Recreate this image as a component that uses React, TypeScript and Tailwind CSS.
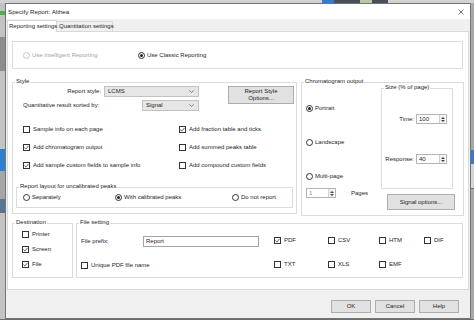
import type { ReactNode } from 'react';

const font = { fontFamily: '"Liberation Sans", Arial, sans-serif' };

function Check({ checked, label }: { checked?: boolean; label: string }) {
    return (
        <div className='flex items-center gap-[3px] whitespace-nowrap'>
            <span className='w-[7px] h-[7px] border border-[#333] bg-white flex items-center justify-center shrink-0'>
                {checked && (
                    <svg width='5' height='5' viewBox='0 0 5 5'>
                        <path d='M0.4 2.6 L1.9 4 L4.6 0.8' fill='none' stroke='#333' strokeWidth='0.8' />
                    </svg>
                )}
            </span>
            <span>{label}</span>
        </div>
    );
}

function Radio({ checked, label, disabled }: { checked?: boolean; label: string; disabled?: boolean }) {
    return (
        <div className={`flex items-center gap-[2px] whitespace-nowrap ${disabled ? 'text-[#a3a3a3]' : ''}`}>
            <span
                className={`w-[7px] h-[7px] rounded-full border bg-white flex items-center justify-center shrink-0 ${
                    disabled ? 'border-[#c4c4c4]' : 'border-[#333]'
                }`}
            >
                {checked && <span className='w-[3px] h-[3px] rounded-full bg-[#222]' />}
            </span>
            <span>{label}</span>
        </div>
    );
}

function Group({ title, className, children }: { title?: string; className: string; children?: ReactNode }) {
    return (
        <div className={`border border-[#dcdcdc] ${className}`}>
            {title && <div className='-mt-[5px] ml-[2px] w-fit h-[7px] px-[1px] bg-white leading-[7px] whitespace-nowrap'>{title}</div>}
            {children}
        </div>
    );
}

function Btn({ children, className }: { children: ReactNode; className: string }) {
    return (
        <div className={`bg-[#e1e1e1] border border-[#adadad] flex items-center justify-center text-center leading-[7px] ${className}`}>
            {children}
        </div>
    );
}

function Select({ value, className }: { value: string; className: string }) {
    return (
        <div className={`h-[11px] bg-[#e6e6e6] border border-[#c2c2c2] flex items-center justify-between pl-[3px] pr-[4px] ${className}`}>
            <span>{value}</span>
            <svg width='5' height='3' viewBox='0 0 5 3'>
                <path d='M0.3 0.4 L2.5 2.5 L4.7 0.4' fill='none' stroke='#555' strokeWidth='0.7' />
            </svg>
        </div>
    );
}

function Spin({ value, className }: { value: string; className: string }) {
    return (
        <div className={`h-[10px] bg-white border border-[#b4b4b4] flex items-center justify-between pl-[2px] ${className}`}>
            <span>{value}</span>
            <div className='w-[6px] h-full mr-[1px] flex flex-col items-center justify-center gap-[1px] bg-[#f2f2f2] border-l border-[#d0d0d0]'>
                <svg width='4' height='2' viewBox='0 0 4 2'>
                    <path d='M0 2 L2 0 L4 2 Z' fill='#444' />
                </svg>
                <svg width='4' height='2' viewBox='0 0 4 2'>
                    <path d='M0 0 L2 2 L4 0 Z' fill='#444' />
                </svg>
            </div>
        </div>
    );
}

export default function App() {
    return (
        <div className='w-[474px] h-[320px] bg-[#9e9e9e] flex flex-col overflow-hidden text-[6px] text-[#1e1e1e]' style={font}>
            {/* desktop behind the dialog */}
            <div className='h-[3px] flex bg-[#d2d2d2]'>
                <div className='w-[322px]' />
                <div className='w-[12px] bg-[#2d7fc8]' />
                <div className='w-[26px] bg-[#4a4f57]' />
                <div className='w-[12px] bg-[#b9c7a8]' />
                <div className='w-[16px] bg-[#4a4f57]' />
            </div>
            <div className='flex h-[316px]'>
                <div className='w-[5px] flex flex-col bg-[#c3c3c3]'>
                    <div className='h-[8px]' />
                    <div className='h-[4px] bg-[#4caf50]' />
                    <div className='h-[22px]' />
                    <div className='h-[34px] bg-[#8d8d8d]' />
                    <div className='h-[78px]' />
                    <div className='h-[22px] bg-[#2f7fcf]' />
                    <div className='h-[28px] bg-[#a6a6a6]' />
                    <div className='h-[14px] bg-[#5d7690]' />
                </div>

                {/* dialog */}
                <div className='w-[466px] h-[316px] border border-[#747474] bg-[#f0f0f0] flex flex-col'>
                    <div className='h-[15px] bg-white flex items-center justify-between pl-[2px] pr-[6px] text-[6.2px]'>
                        <span>Specify Report: Althea</span>
                        <svg width='6' height='6' viewBox='0 0 6 6'>
                            <path d='M0.5 0.5 L5.5 5.5 M5.5 0.5 L0.5 5.5' stroke='#333' strokeWidth='0.7' />
                        </svg>
                    </div>

                    <div className='h-[12px] flex items-end pl-[1px]'>
                        <div className='h-[12px] w-[50px] -mb-[1px] z-10 bg-white border border-b-0 border-[#d9d9d9] flex items-center pl-[1px] whitespace-nowrap'>
                            Reporting settings
                        </div>
                        <div className='h-[10px] w-[56px] border border-l-0 border-b-0 border-[#d9d9d9] flex items-center pl-[2px] whitespace-nowrap'>
                            Quantitation settings
                        </div>
                    </div>

                    {/* tab panel */}
                    <div className='mx-[1px] h-[259px] bg-white border border-[#d9d9d9] flex flex-col'>
                        <Group className='mt-[9px] ml-[4px] w-[451px] h-[28px] flex items-center pl-[10px]'>
                            <div className='w-[115px]'>
                                <Radio disabled label='Use Intelligent Reporting' />
                            </div>
                            <Radio checked label='Use Classic Reporting' />
                        </Group>

                        <div className='mt-[13px] ml-[4px] flex items-start gap-[4px]'>
                            {/* Style */}
                            <Group title='Style' className='w-[285px] h-[132px]'>
                                <div className='flex items-start'>
                                    <div className='flex flex-col'>
                                        <div className='mt-[1px] h-[11px] flex items-center'>
                                            <span className='w-[88px] text-right'>Report style:</span>
                                            <Select value='LCMS' className='ml-[3px] w-[95px]' />
                                        </div>
                                        <div className='mt-[3px] h-[11px] flex items-center'>
                                            <span className='w-[129px] pl-[10px]'>Quantitative result sorted by:</span>
                                            <Select value='Signal' className='w-[57px]' />
                                        </div>
                                    </div>
                                    <Btn className='ml-[29px] mt-[1px] w-[66px] h-[18px] flex-col'>
                                        <span>Report Style</span>
                                        <span>Options...</span>
                                    </Btn>
                                </div>

                                <div className='mt-[9px] pl-[10px] grid grid-cols-[156px_1fr] auto-rows-[18px] items-center'>
                                    <Check label='Sample info on each page' />
                                    <Check checked label='Add fraction table and ticks' />
                                    <Check checked label='Add chromatogram output' />
                                    <Check label='Add summed peaks table' />
                                    <Check checked label='Add sample custom fields to sample info' />
                                    <Check label='Add compound custom fields' />
                                </div>

                                <Group title='Report layout for uncalibrated peaks' className='mt-[13px] ml-[3px] w-[277px] h-[21px]'>
                                    <div className='h-[15px] flex items-center pl-[6px]'>
                                        <div className='w-[92px]'>
                                            <Radio label='Separately' />
                                        </div>
                                        <div className='w-[117px]'>
                                            <Radio checked label='With calibrated peaks' />
                                        </div>
                                        <Radio label='Do not report' />
                                    </div>
                                </Group>
                            </Group>

                            {/* Chromatogram output */}
                            <Group title='Chromatogram output' className='w-[163px] h-[134px]'>
                                <div className='flex items-start'>
                                    <div className='w-[79px] pl-[4px] flex flex-col'>
                                        <div className='mt-[19px] h-[8px] flex items-center'>
                                            <Radio checked label='Portrait' />
                                        </div>
                                        <div className='mt-[26px] h-[8px] flex items-center'>
                                            <Radio label='Landscape' />
                                        </div>
                                        <div className='mt-[26px] h-[8px] flex items-center'>
                                            <Radio label='Multi-page' />
                                        </div>
                                        <div className='mt-[8px] h-[10px] flex items-center'>
                                            <Spin value='1' className='w-[30px] text-[#8a8a8a]' />
                                            <span className='ml-[15px]'>Pages</span>
                                        </div>
                                    </div>
                                    <div className='flex flex-col -mt-[3px]'>
                                        <Group title='Size (% of page)' className='mt-[6px] w-[72px] h-[101px]'>
                                            <div className='mt-[23px] h-[10px] flex items-center justify-end gap-[2px] pr-[5px]'>
                                                <span>Time:</span>
                                                <Spin value='100' className='w-[31px]' />
                                            </div>
                                            <div className='mt-[30px] h-[10px] flex items-center justify-end gap-[2px] pr-[5px]'>
                                                <span>Response:</span>
                                                <Spin value='40' className='w-[31px]' />
                                            </div>
                                        </Group>
                                        <Btn className='mt-[5px] ml-[6px] w-[68px] h-[16px]'>Signal options...</Btn>
                                    </div>
                                </div>
                            </Group>
                        </div>

                        <div className='mt-[7px] ml-[4px] flex items-start gap-[3px]'>
                            <Group title='Destination' className='w-[61px] h-[55px]'>
                                <div className='mt-[1px] pl-[9px] flex flex-col'>
                                    <div className='h-[15px] flex items-center'>
                                        <Check label='Printer' />
                                    </div>
                                    <div className='h-[15px] flex items-center'>
                                        <Check checked label='Screen' />
                                    </div>
                                    <div className='h-[15px] flex items-center'>
                                        <Check checked label='File' />
                                    </div>
                                </div>
                            </Group>
                            <Group title='File setting' className='w-[387px] h-[55px]'>
                                <div className='flex items-start'>
                                    <div className='w-[197px] flex flex-col'>
                                        <div className='mt-[10px] h-[11px] flex items-center'>
                                            <span className='w-[66px] pl-[4px]'>File prefix:</span>
                                            <div className='w-[116px] h-[11px] border border-[#a5a5a5] bg-white flex items-center pl-[2px]'>Report</div>
                                        </div>
                                        <div className='mt-[14px] h-[8px] pl-[4px] flex items-center'>
                                            <Check label='Unique PDF file name' />
                                        </div>
                                    </div>
                                    <div className='mt-[10px] grid grid-cols-[54px_51px_45px_30px] auto-rows-[8px] gap-y-[16px] items-center'>
                                        <Check checked label='PDF' />
                                        <Check label='CSV' />
                                        <Check label='HTM' />
                                        <Check label='DIF' />
                                        <Check label='TXT' />
                                        <Check label='XLS' />
                                        <Check label='EMF' />
                                    </div>
                                </div>
                            </Group>
                        </div>
                    </div>

                    {/* footer buttons */}
                    <div className='flex-1 flex justify-end items-start gap-[4px] pt-[10px] pr-[11px]'>
                        <Btn className='w-[40px] h-[13px]'>OK</Btn>
                        <Btn className='w-[40px] h-[13px]'>Cancel</Btn>
                        <Btn className='w-[40px] h-[13px]'>Help</Btn>
                    </div>
                </div>

                <div className='flex-1 flex flex-col bg-[#a9a9a9]'>
                    <div className='h-[147px]' />
                    <div className='h-[14px] bg-[#2f7fcf]' />
                    <div className='h-[24px] bg-[#d4d4d4]' />
                    <div className='h-[1px] bg-[#6f6f6f]' />
                </div>
            </div>
            <div className='flex-1 bg-[#6d6d6d]' />
        </div>
    );
}
